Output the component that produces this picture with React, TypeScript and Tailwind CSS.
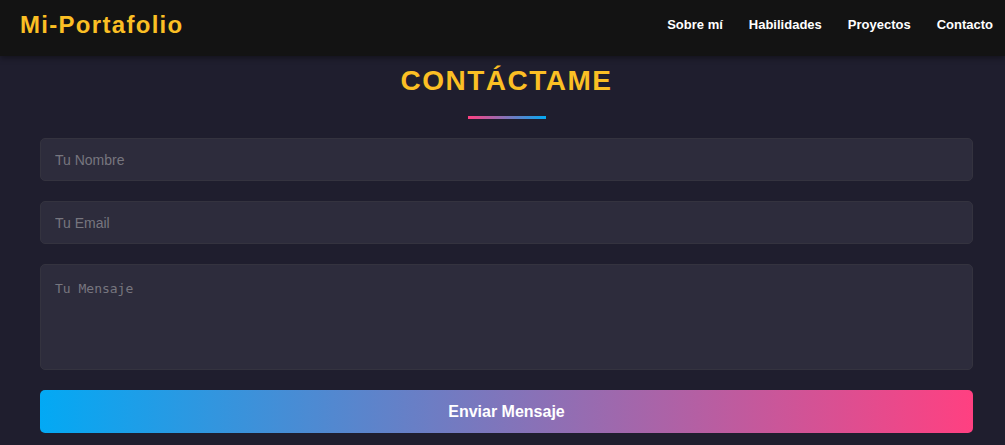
import React from "react";

const navLinks = ["Sobre mí", "Habilidades", "Proyectos", "Contacto"];

export default function App() {
  return (
    <div className="min-h-[445px] bg-[#1f1e2e] font-['Liberation_Sans',Arial,sans-serif]">
      <header className="relative z-10 flex h-[56px] items-center justify-between bg-[#131313] pb-[6px] pl-[20px] pr-[12px] shadow-[0_2px_6px_rgba(0,0,0,0.4)]">
        <span className="text-[24px] font-bold tracking-[1.3px] text-[#fbbf24]">
          Mi-Portafolio
        </span>
        <nav className="flex gap-[26px]">
          {navLinks.map((link) => (
            <a key={link} href="#" className="text-[13px] font-bold text-white">
              {link}
            </a>
          ))}
        </nav>
      </header>

      <section className="pl-[40px] pr-[32px] pt-[7px]">
        <h2 className="text-center text-[28px] font-bold leading-[36px] tracking-[1.5px] text-[#fbbf24]">
          CONTÁCTAME
        </h2>
        <div className="mx-auto mt-[17px] h-[3px] w-[78px] bg-[linear-gradient(to_right,#ff4081,#03a9f4)]" />

        <form className="mt-[19px] flex flex-col gap-[20px]">
          <input
            type="text"
            placeholder="Tu Nombre"
            className="h-[43px] rounded-[5px] border border-[#34333f] bg-[#2d2c3c] px-[14px] text-[14px] text-white placeholder:text-[#77767f] outline-none"
          />
          <input
            type="email"
            placeholder="Tu Email"
            className="h-[43px] rounded-[5px] border border-[#34333f] bg-[#2d2c3c] px-[14px] text-[14px] text-white placeholder:text-[#77767f] outline-none"
          />
          <textarea
            placeholder="Tu Mensaje"
            className="h-[106px] resize-none rounded-[5px] border border-[#34333f] bg-[#2d2c3c] p-[14px] font-['DejaVu_Sans_Mono',monospace] text-[13px] text-white placeholder:text-[#77767f] outline-none"
          />
          <button
            type="button"
            className="h-[43px] rounded-[5px] bg-[linear-gradient(to_right,#03a9f4,#ff4081)] text-[16px] font-bold text-white"
          >
            Enviar Mensaje
          </button>
        </form>
      </section>
    </div>
  );
}
